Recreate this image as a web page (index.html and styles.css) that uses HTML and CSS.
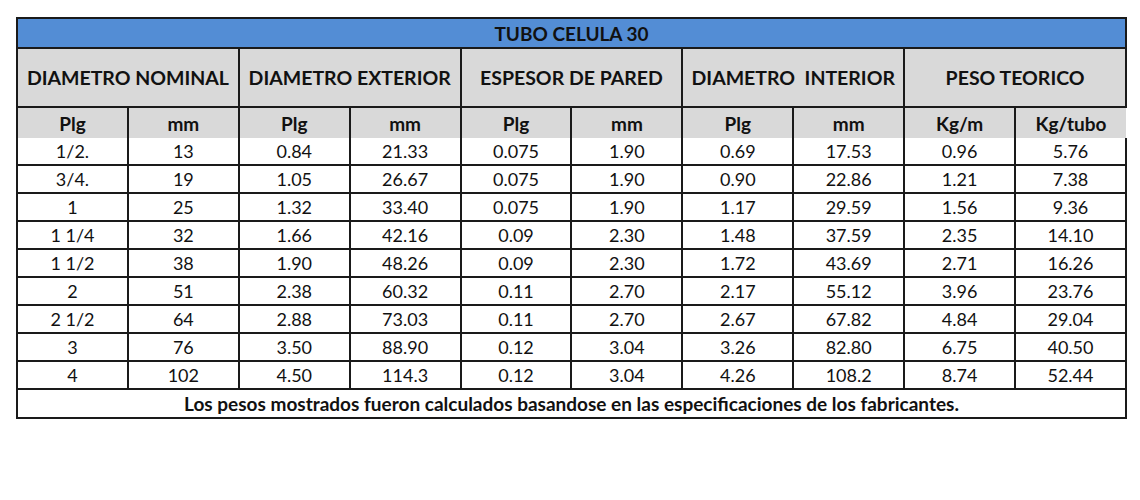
FILE: index.html
```html
<!DOCTYPE html>
<html lang="es">
<head>
<meta charset="utf-8">
<title>Tubo Celula 30</title>
<link rel="stylesheet" href="styles.css">
</head>
<body>
<table class="spec">
  <colgroup>
    <col><col><col><col><col><col><col><col><col><col>
  </colgroup>
  <thead>
    <tr class="title-row"><th colspan="10">TUBO CELULA 30</th></tr>
    <tr class="group-row">
      <th colspan="2">DIAMETRO NOMINAL</th>
      <th colspan="2">DIAMETRO EXTERIOR</th>
      <th colspan="2">ESPESOR DE PARED</th>
      <th colspan="2">DIAMETRO&nbsp; INTERIOR</th>
      <th colspan="2" class="last">PESO TEORICO</th>
    </tr>
    <tr class="unit-row">
      <th>Plg</th><th>mm</th>
      <th>Plg</th><th>mm</th>
      <th>Plg</th><th>mm</th>
      <th>Plg</th><th>mm</th>
      <th>Kg/m</th><th class="open">Kg/tubo</th>
    </tr>
  </thead>
  <tbody>
    <tr><td>1/2.</td><td>13</td><td>0.84</td><td>21.33</td><td>0.075</td><td>1.90</td><td>0.69</td><td>17.53</td><td>0.96</td><td class="last">5.76</td></tr>
    <tr><td>3/4.</td><td>19</td><td>1.05</td><td>26.67</td><td>0.075</td><td>1.90</td><td>0.90</td><td>22.86</td><td>1.21</td><td class="last">7.38</td></tr>
    <tr><td>1</td><td>25</td><td>1.32</td><td>33.40</td><td>0.075</td><td>1.90</td><td>1.17</td><td>29.59</td><td>1.56</td><td class="last">9.36</td></tr>
    <tr><td>1 1/4</td><td>32</td><td>1.66</td><td>42.16</td><td>0.09</td><td>2.30</td><td>1.48</td><td>37.59</td><td>2.35</td><td class="last">14.10</td></tr>
    <tr><td>1 1/2</td><td>38</td><td>1.90</td><td>48.26</td><td>0.09</td><td>2.30</td><td>1.72</td><td>43.69</td><td>2.71</td><td class="last">16.26</td></tr>
    <tr><td>2</td><td>51</td><td>2.38</td><td>60.32</td><td>0.11</td><td>2.70</td><td>2.17</td><td>55.12</td><td>3.96</td><td class="last">23.76</td></tr>
    <tr><td>2 1/2</td><td>64</td><td>2.88</td><td>73.03</td><td>0.11</td><td>2.70</td><td>2.67</td><td>67.82</td><td>4.84</td><td class="last">29.04</td></tr>
    <tr><td>3</td><td>76</td><td>3.50</td><td>88.90</td><td>0.12</td><td>3.04</td><td>3.26</td><td>82.80</td><td>6.75</td><td class="last">40.50</td></tr>
    <tr><td>4</td><td>102</td><td>4.50</td><td>114.3</td><td>0.12</td><td>3.04</td><td>4.26</td><td>108.2</td><td>8.74</td><td class="last">52.44</td></tr>
  </tbody>
  <tfoot>
    <tr class="note-row"><td colspan="10" class="last">Los pesos mostrados fueron calculados basandose en las especificaciones de los fabricantes.</td></tr>
  </tfoot>
</table>
</body>
</html>
```
FILE: styles.css
```css
html, body {
  margin: 0;
  padding: 0;
  background: #ffffff;
}

body {
  padding: 17px 0 0 16px;
  font-family: Lato, "Liberation Sans", Arial, sans-serif;
  color: #111111;
}

.spec {
  border-collapse: collapse;
  table-layout: fixed;
  width: 1109px;
}

.spec col {
  width: 110.9px;
}

.spec th,
.spec td {
  padding: 0;
  text-align: center;
  white-space: nowrap;
  border-left: 2px solid #1a1a1a;
  border-right: 2px solid #1a1a1a;
}

.title-row th {
  background: #538dd5;
  height: 28px;
  font-size: 19px;
  font-weight: 700;
  border-top: 2px solid #1a1a1a;
  border-bottom: 2px solid #1a1a1a;
}

.group-row th {
  background: #d9d9d9;
  height: 57px;
  font-size: 19.5px;
  font-weight: 700;
  border-bottom: 2px solid #1a1a1a;
}

.unit-row th {
  background: #d9d9d9;
  height: 30px;
  font-size: 19px;
  font-weight: 700;
}

.unit-row th.open {
  border-right: 0;
}

.spec tbody td {
  height: 26px;
  font-size: 18px;
  font-weight: 400;
  border-bottom: 2px solid #1a1a1a;
}

.note-row td {
  height: 27px;
  font-size: 19px;
  font-weight: 700;
  border-bottom: 2px solid #1a1a1a;
}
```
